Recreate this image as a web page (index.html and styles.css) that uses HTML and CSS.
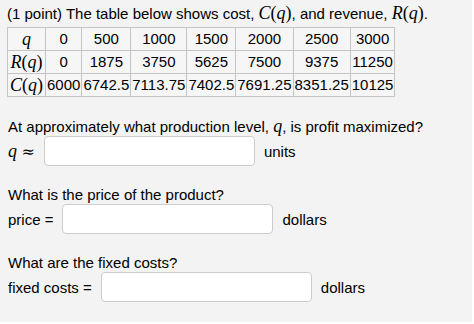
FILE: index.html
```html
<!DOCTYPE html>
<html>
<head>
<meta charset="utf-8">
<link rel="stylesheet" href="styles.css">
</head>
<body>
<div class="panel">
  <p class="title">(1 point) The table below shows cost, <span class="m"><i>C</i>(<i>q</i>)</span>, and revenue, <span class="m"><i>R</i>(<i>q</i>)</span>.</p>
  <table class="data">
    <tr><td class="m"><i>q</i></td><td>0</td><td>500</td><td>1000</td><td>1500</td><td>2000</td><td>2500</td><td>3000</td></tr>
    <tr><td class="m"><i>R</i>(<i>q</i>)</td><td>0</td><td>1875</td><td>3750</td><td>5625</td><td>7500</td><td>9375</td><td>11250</td></tr>
    <tr><td class="m"><i>C</i>(<i>q</i>)</td><td>6000</td><td>6742.5</td><td>7113.75</td><td>7402.5</td><td>7691.25</td><td>8351.25</td><td>10125</td></tr>
  </table>

  <p class="q first">At approximately what production level, <span class="m"><i>q</i></span>, is profit maximized?</p>
  <div class="answer">
    <span class="label m"><i>q</i> <span class="approx">≈</span></span>
    <input class="box" type="text">
    <span class="unit">units</span>
  </div>

  <p class="q">What is the price of the product?</p>
  <div class="answer">
    <span class="label">price =</span>
    <input class="box" type="text">
    <span class="unit">dollars</span>
  </div>

  <p class="q">What are the fixed costs?</p>
  <div class="answer">
    <span class="label">fixed costs =</span>
    <input class="box" type="text">
    <span class="unit">dollars</span>
  </div>
</div>
</body>
</html>
```

FILE: styles.css
```css
html, body {
  margin: 0;
  padding: 0;
  background: #ffffff;
}
.panel {
  width: 472px;
  height: 322px;
  background: #f3f3f3;
  box-sizing: border-box;
  padding: 5px 7px 0 8px;
  font-family: "Liberation Sans", Arial, sans-serif;
  font-size: 15px;
  color: #000;
}
p {
  margin: 0;
  line-height: 18px;
}
.title {
  margin-left: -1px;
}
.m {
  font-family: "Liberation Serif", "Times New Roman", serif;
  font-size: 18px;
  line-height: 18px;
}
p .m {
  line-height: 0;
}
.m i {
  font-style: italic;
}
.approx {
  font-family: "DejaVu Serif", serif;
  font-size: 16px;
}
.data {
  border-collapse: collapse;
  margin-top: 4px;
  margin-left: -1px;
  border: 1px solid #8a8a8a;
  background: #f6f6f6;
}
.data td {
  border: 1px solid #c4c4c4;
  text-align: center;
  padding: 0 1px;
  height: 22px;
  line-height: 22px;
  font-size: 15px;
}
.data td.m {
  font-size: 18px;
  padding: 0 2px;
}
.q {
  margin-top: 20px;
}
.q.first {
  margin-top: 21px;
}
.answer {
  display: flex;
  align-items: center;
  gap: 9px;
  height: 30px;
}
.box {
  width: 211px;
  height: 30px;
  box-sizing: border-box;
  border: 1px solid #cccccc;
  border-radius: 4px;
  background: #ffffff;
  margin: 0;
  padding: 0 6px;
}
```
